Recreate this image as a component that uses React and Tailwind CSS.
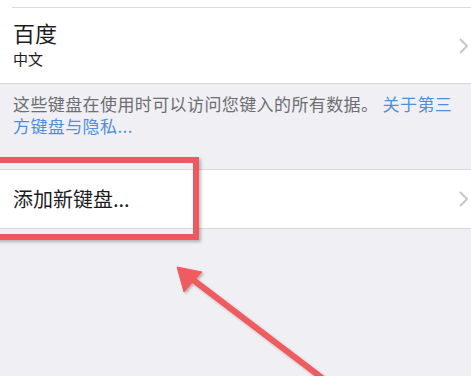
const font = { fontFamily: '"Noto Sans CJK SC", "Noto Sans", sans-serif' }

function Chevron() {
  return (
    <svg width="9" height="16" viewBox="0 0 9 16" className="shrink-0">
      <path d="M1 1l7 7-7 7" fill="none" stroke="#c7c7cc" strokeWidth="2" />
    </svg>
  )
}

export default function App() {
  return (
    <div className="relative h-[376px] w-[471px] overflow-hidden bg-[#efeff4]" style={font}>
      {/* previous cell tail */}
      <div className="h-[7px] bg-white" />
      <div className="bg-white pl-3">
        <div className="h-px bg-[#dcdce0]" />
      </div>

      <div className="flex h-[76px] items-center border-b border-[#d8d8dc] bg-white pl-[13px] pr-[3px]">
        <div className="flex-1 self-start pt-[11px]">
          <div className="text-[22px] leading-[26px] text-[#1c1c1e]">百度</div>
          <div className="mt-[5px] text-[15px] leading-[18px] text-[#1c1c1e]">中文</div>
        </div>
        <Chevron />
      </div>

      <p className="px-[13px] pt-[9px] text-[17px] leading-[22px] tracking-[0.4px] text-[#6d6d72]">
        这些键盘在使用时可以访问您键入的所有数据。 <span className="text-[#4d8fdc]">关于第三方键盘与隐私...</span>
      </p>

      <div className="mt-[32px] flex h-[60px] items-center border-y border-[#d8d8dc] bg-white pl-[13px] pr-[3px]">
        <div className="flex-1 text-[20px] leading-[26px] text-[#1c1c1e]">添加新键盘...</div>
        <Chevron />
      </div>

      {/* annotation box */}
      <div className="absolute left-[-12px] top-[157px] h-[83px] w-[211px] border-[6px] border-[#ec5a5f] shadow-[2px_2px_3px_rgba(0,0,0,0.25)]" />

      {/* annotation arrow */}
      <svg className="absolute left-0 top-0" width="471" height="376" viewBox="0 0 471 376">
        <defs>
          <filter id="sh" x="-20%" y="-20%" width="140%" height="140%">
            <feDropShadow dx="1.5" dy="1.5" stdDeviation="1.2" floodColor="#000" floodOpacity="0.25" />
          </filter>
        </defs>
        <g filter="url(#sh)" fill="#ef5b60" stroke="#ef5b60">
          <line x1="330" y1="384" x2="188" y2="276" strokeWidth="6" />
          <polygon points="177,267 202,272 184,292" strokeWidth="1" strokeLinejoin="round" />
        </g>
      </svg>
    </div>
  )
}
